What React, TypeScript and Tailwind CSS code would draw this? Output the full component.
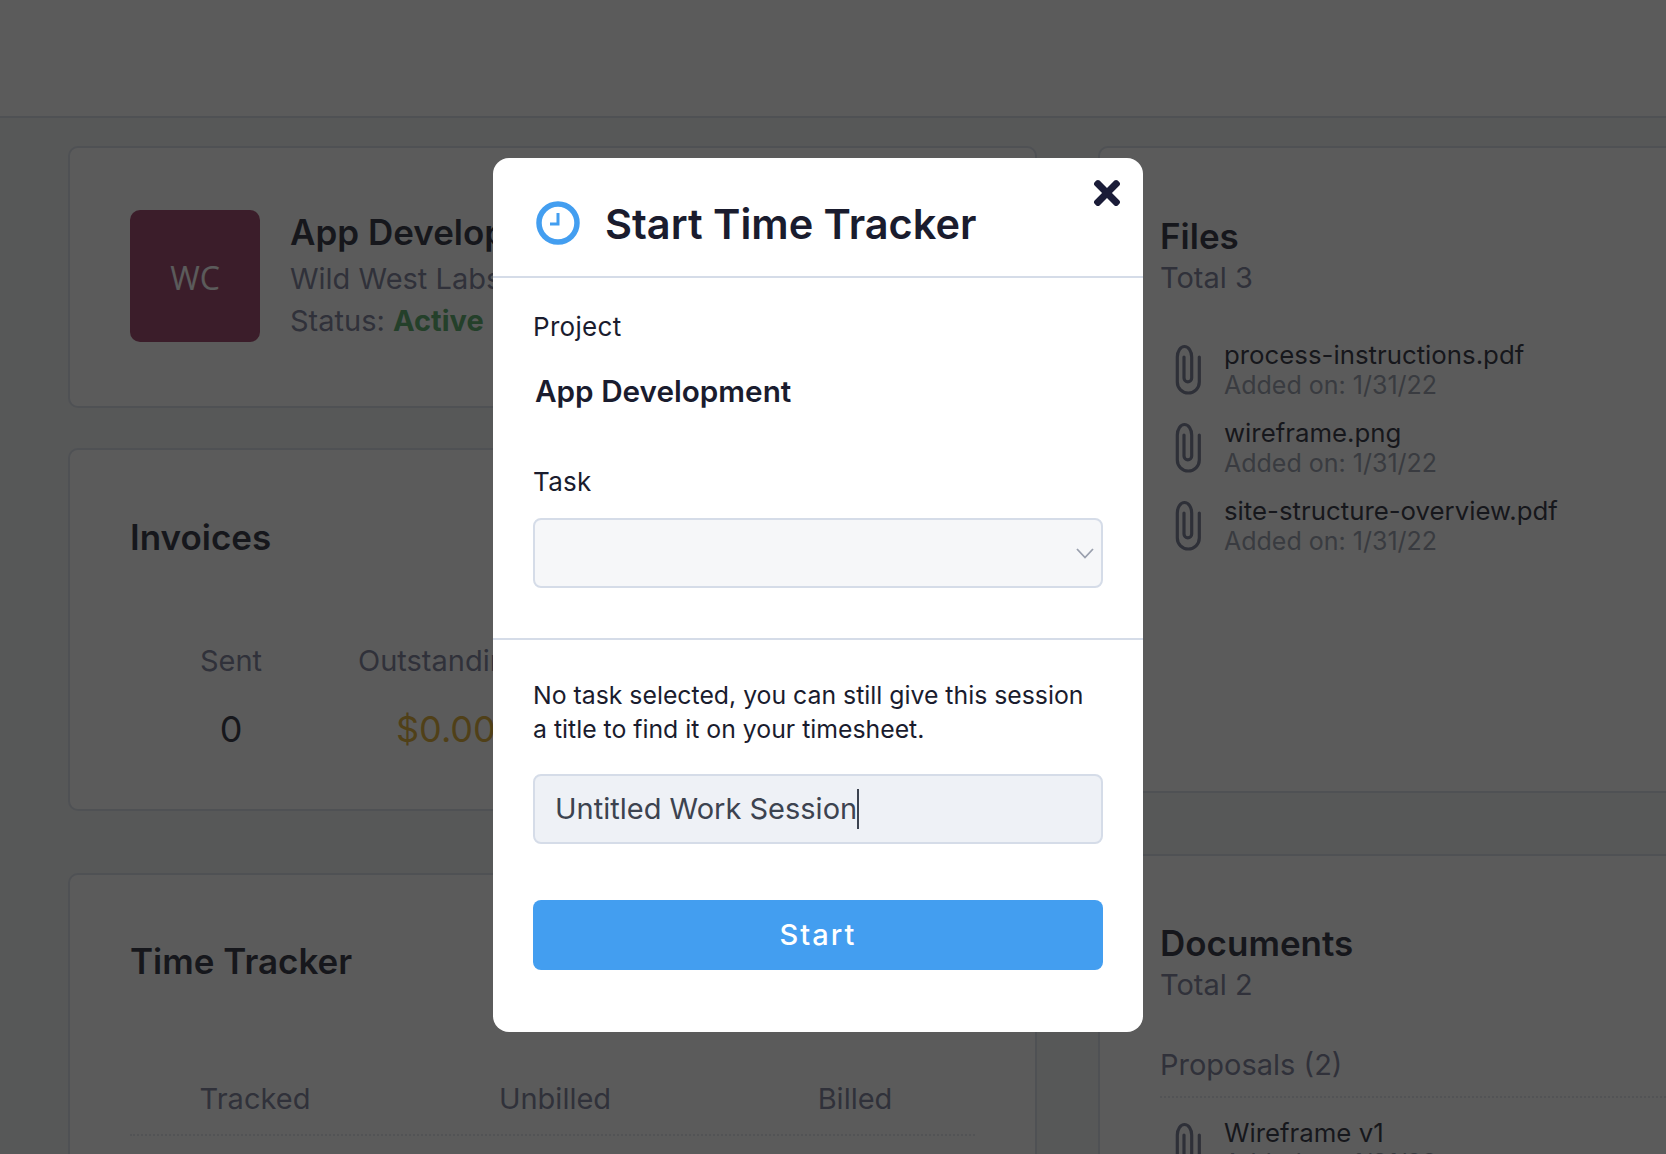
import { FaTimes } from "react-icons/fa";
import React from "react";

function Clip() {
  return (
    <svg width="30" height="52" viewBox="0 0 30 52" fill="none" stroke="currentColor" strokeWidth="3.2" strokeLinecap="round" className="shrink-0 -mt-[3px] text-[#6a6f8a]">
      <path d="M9 13v21a3.85 3.85 0 0 0 7.7 0V13A7.2 10.5 0 0 0 2.3 13v25a11 11 0 0 0 22 0V13" />
    </svg>
  );
}

function FileRow({ name, date }: { name: string; date: string }) {
  return (
    <div className="flex items-start gap-[19px] h-[78px] pl-[15px]">
      <Clip />
      <div className="-mt-[7px]">
        <p className="text-[25.8px] leading-[30px] text-[#1a1c2e]">{name}</p>
        <p className="text-[25px] leading-[30px] text-[#8d93a3]">{date}</p>
      </div>
    </div>
  );
}

function ClockIcon() {
  return (
    <svg width="44" height="44" viewBox="0 0 44 44" fill="none" className="shrink-0">
      <circle cx="22" cy="22" r="19" stroke="#439ef0" strokeWidth="5.5" />
      <path d="M22 12v11h-8" stroke="#439ef0" strokeWidth="3" />
    </svg>
  );
}

export default function App() {
  return (
    <div className="relative h-[1154px] overflow-hidden bg-[#f1f3f4] font-['Inter',sans-serif]">
      <div className="h-[118px] bg-white border-b-2 border-[#d5dce8]" />

      <div className="flex gap-[61px] pl-[68px] pt-[28px]">
        <div className="w-[969px] shrink-0 flex flex-col">
          <div className="h-[262px] mb-[40px] rounded-[10px] border-2 border-[#d5dce8] bg-white pl-[60px] pt-[62px] flex gap-[30px]">
            <div className="w-[130px] h-[132px] pt-[3px] rounded-[10px] bg-[#95315a] flex items-center justify-center text-[32px] text-white font-['Open_Sans',sans-serif]">
              WC
            </div>
            <div>
              <h2 className="text-[35px] leading-[44px] font-semibold text-[#1a1c2e]">App Development</h2>
              <p className="mt-[4px] text-[29px] leading-[42px] text-[#6f7490]">Wild West Labs</p>
              <p className="text-[29px] leading-[42px] text-[#6f7490]">
                Status: <span className="font-bold text-[#46a45c]">Active</span>
              </p>
            </div>
          </div>

          <div className="h-[363px] mb-[62px] rounded-[10px] border-2 border-[#d5dce8] bg-white pl-[60px] pt-[65px]">
            <h2 className="text-[35px] leading-[45px] font-semibold text-[#1a1c2e]">Invoices</h2>
            <div className="mt-[83px] grid grid-cols-[202px_220px] text-center">
              <p className="text-[29px] leading-[36px] text-[#6f7490]">Sent</p>
              <p className="text-[29px] leading-[36px] text-[#6f7490] text-left pl-[26px]">Outstanding</p>
              <p className="mt-[30px] text-[36px] leading-[40px] text-[#1a1c2e]">0</p>
              <p className="mt-[30px] text-[36px] leading-[40px] text-[#d9a520] text-left pl-[64px]">$0.00</p>
            </div>
          </div>

          <div className="h-[400px] rounded-[10px] border-2 border-[#d5dce8] bg-white pl-[60px] pt-[64px]">
            <h2 className="text-[35px] leading-[45px] font-semibold text-[#1a1c2e]">Time Tracker</h2>
            <div className="mt-[97px] -ml-[25px] flex text-[29px] leading-[36px] text-[#6f7490]">
              <p className="w-[300px] text-center">Tracked</p>
              <p className="w-[300px] text-center">Unbilled</p>
              <p className="w-[300px] text-center">Billed</p>
            </div>
            <div className="mt-[17px] mr-[60px] border-b-2 border-dotted border-[#e0e4ea]" />
          </div>
        </div>

        <div className="flex-1 flex flex-col">
          <div className="h-[647px] mb-[61px] -mr-[30px] rounded-[10px] border-2 border-[#d5dce8] bg-white pl-[60px] pt-[66px]">
            <h2 className="text-[35px] leading-[45px] font-semibold text-[#1a1c2e]">Files</h2>
            <p className="text-[29px] leading-[38px] text-[#6f7490]">Total 3</p>
            <div className="mt-[50px]">
              <FileRow name="process-instructions.pdf" date="Added on: 1/31/22" />
              <FileRow name="wireframe.png" date="Added on: 1/31/22" />
              <FileRow name="site-structure-overview.pdf" date="Added on: 1/31/22" />
            </div>
          </div>

          <div className="h-[400px] -mr-[30px] rounded-[10px] border-2 border-[#d5dce8] bg-white pl-[60px] pt-[65px]">
            <h2 className="text-[35px] leading-[45px] font-semibold text-[#1a1c2e]">Documents</h2>
            <p className="text-[29px] leading-[38px] text-[#6f7490]">Total 2</p>
            <p className="mt-[42px] text-[29px] leading-[38px] text-[#6f7490]">Proposals (2)</p>
            <div className="mt-[12px] border-b-2 border-dotted border-[#e0e4ea]" />
            <div className="mt-[27px]">
              <FileRow name="Wireframe v1" date="Added on: 1/31/22" />
            </div>
          </div>
        </div>
      </div>

      {/* modal overlay */}
      <div className="absolute inset-0 bg-[#161616]/70 pl-[493px] pt-[158px]">
        <div className="relative w-[650px] h-[874px] rounded-[16px] bg-white text-[#1a1c2e]">
          <button className="absolute top-[16px] right-[17px] text-[38px] text-[#1a1c38]">
            <FaTimes />
          </button>

          <div className="h-[120px] border-b-2 border-[#d5dce8] flex items-start pl-[43px] pt-[43px] gap-[25px]">
            <ClockIcon />
            <h1 className="text-[41.5px] leading-[46px] font-semibold">Start Time Tracker</h1>
          </div>

          <div className="h-[362px] border-b-2 border-[#d5dce8] pt-[31px] px-[40px]">
            <p className="text-[26px] leading-[36px] tracking-[0.3px]">Project</p>
            <p className="mt-[28px] ml-[2px] text-[29.7px] leading-[36px] font-semibold">App Development</p>
            <p className="mt-[55px] text-[26px] leading-[36px] tracking-[0.3px]">Task</p>
            <div className="relative mt-[18px] h-[70px] rounded-[8px] border-2 border-[#d5dce8] bg-[#f6f7f9]">
              <svg width="18" height="11" viewBox="0 0 18 11" fill="none" stroke="#9aa0ae" strokeWidth="1.8" className="absolute right-[7px] top-[28px]">
                <path d="M1 1l8 8.5L17 1" />
              </svg>
            </div>
          </div>

          <div className="px-[40px] pt-[38px]">
            <p className="text-[24.8px] leading-[34px]">
              No task selected, you can still give this session
              <br />
              a title to find it on your timesheet.
            </p>
            <div className="mt-[28px] h-[70px] rounded-[8px] border-2 border-[#d5dce8] bg-[#eef1f6] flex items-center pl-[20px] text-[29px] text-[#3c4350]">
              Untitled Work Session
              <span className="h-[40px] w-[2px] bg-[#3c4350]" />
            </div>
            <button className="mt-[56px] w-full h-[70px] rounded-[8px] bg-[#439ef0] text-[29px] font-medium tracking-[2px] text-white">
              Start
            </button>
          </div>
        </div>
      </div>
    </div>
  );
}
